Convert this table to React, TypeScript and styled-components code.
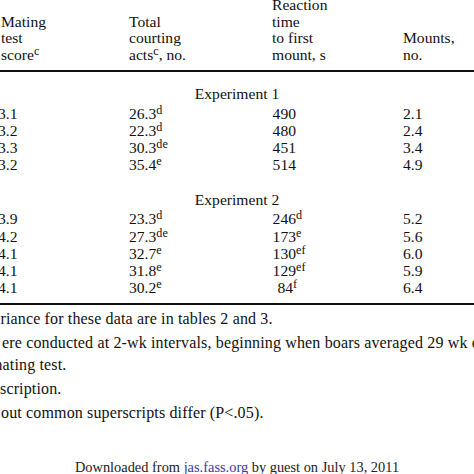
import React from 'react'
import styled, { createGlobalStyle } from 'styled-components'

const GlobalStyle = createGlobalStyle`
    html, body {
        margin: 0;
        padding: 0;
        background: #ffffff;
    }
`

const Page = styled.div`
    width: 474px;
    height: 474px;
    overflow: hidden;
    display: flex;
    flex-direction: column;
    font-family: "Liberation Serif", "DejaVu Serif", serif;
    color: #111;
    background: #fff;
`

const Grid = styled.div`
    display: grid;
    grid-template-columns: 129px 143px 131px 1fr;
    white-space: nowrap;
`

const HeaderRow = styled(Grid)`
    margin-top: -3px;
    align-items: end;
    font-size: 15.6px;
    line-height: 16.5px;
`

const HeadCell = styled.div<{ $shift?: number }>`
    margin-left: ${(p) => p.$shift || 0}px;
`

const Rule = styled.div<{ $top: number }>`
    height: 2px;
    margin-top: ${(p) => p.$top}px;
    background: #111;
`

const ExpTitle = styled.div<{ $top: number }>`
    margin-top: ${(p) => p.$top}px;
    text-align: center;
    font-size: 15.6px;
    line-height: 17px;
`

const Body = styled.div<{ $top: number }>`
    margin-top: ${(p) => p.$top}px;
`

const Row = styled(Grid)`
    font-size: 15.6px;
    line-height: 17.2px;
`

const Cell = styled.div<{ $shift?: number }>`
    margin-left: ${(p) => p.$shift || 0}px;
`

const Digits = styled.span`
    display: inline-block;
    width: 24px;
    text-align: right;
`

const Sup = styled.sup`
    font-size: 0.78em;
    line-height: 0;
    vertical-align: 0.42em;
`

const Notes = styled.div`
    margin-top: 3px;
    font-size: 16px;
    line-height: 22px;
    white-space: nowrap;
    letter-spacing: 0.15px;
`

const Note = styled.div<{ $top?: number; $shift?: number }>`
    margin-top: ${(p) => p.$top || 0}px;
    margin-left: ${(p) => p.$shift || 0}px;
`

const Footer = styled.div`
    margin-top: auto;
    text-align: center;
    font-family: "Liberation Serif", "Times New Roman", serif;
    font-size: 14.4px;
    line-height: 14px;
    color: #222;
`

const Link = styled.span`
    color: #3a3aa6;
`

type DataRow = [string, string, string, string, string, string]

const exp1: DataRow[] = [
    ['3.1', '26.3', 'd', '490', '', '2.1'],
    ['3.2', '22.3', 'd', '480', '', '2.4'],
    ['3.3', '30.3', 'de', '451', '', '3.4'],
    ['3.2', '35.4', 'e', '514', '', '4.9'],
]

const exp2: DataRow[] = [
    ['3.9', '23.3', 'd', '246', 'd', '5.2'],
    ['4.2', '27.3', 'de', '173', 'e', '5.6'],
    ['4.1', '32.7', 'e', '130', 'ef', '6.0'],
    ['4.1', '31.8', 'e', '129', 'ef', '5.9'],
    ['4.1', '30.2', 'e', '84', 'f', '6.4'],
]

function DataRows({ rows, top }: { rows: DataRow[]; top: number }) {
    return (
        <Body $top={top}>
            {rows.map((r, i) => (
                <Row key={i}>
                    <Cell $shift={-2}>{r[0]}</Cell>
                    <Cell>
                        {r[1]}
                        {r[2] && <Sup>{r[2]}</Sup>}
                    </Cell>
                    <Cell $shift={r[3].length < 3 ? -3 : 0}>
                        <Digits>{r[3]}</Digits>
                        {r[4] && <Sup>{r[4]}</Sup>}
                    </Cell>
                    <Cell>{r[5]}</Cell>
                </Row>
            ))}
        </Body>
    )
}

export default function App() {
    return (
        <Page>
            <GlobalStyle />
            <HeaderRow>
                <HeadCell $shift={1}>
                    Mating<br />test<br />score<Sup>c</Sup>
                </HeadCell>
                <HeadCell>
                    Total<br />courting<br />acts<Sup>c</Sup>, no.
                </HeadCell>
                <HeadCell>
                    Reaction<br />time<br />to first<br />mount, s
                </HeadCell>
                <HeadCell>
                    Mounts,<br />no.
                </HeadCell>
            </HeaderRow>
            <Rule $top={7} />

            <ExpTitle $top={12.5}>Experiment 1</ExpTitle>
            <DataRows rows={exp1} top={3} />

            <ExpTitle $top={18}>Experiment 2</ExpTitle>
            <DataRows rows={exp2} top={2} />
            <Rule $top={7} />

            <Notes>
                <Note $shift={-15}>variance for these data are in tables 2 and 3.</Note>
                <Note $top={2} $shift={2}>
                    ere conducted at 2-wk intervals, beginning when boars averaged 29 wk of
                </Note>
                <Note $shift={-10}>mating test.</Note>
                <Note $top={2}>scription.</Note>
                <Note $top={1.5} $shift={1}>out common superscripts differ (P&lt;.05).</Note>
            </Notes>

            <Footer>
                Downloaded from <Link>jas.fass.org</Link> by guest on July 13, 2011
            </Footer>
        </Page>
    )
}
